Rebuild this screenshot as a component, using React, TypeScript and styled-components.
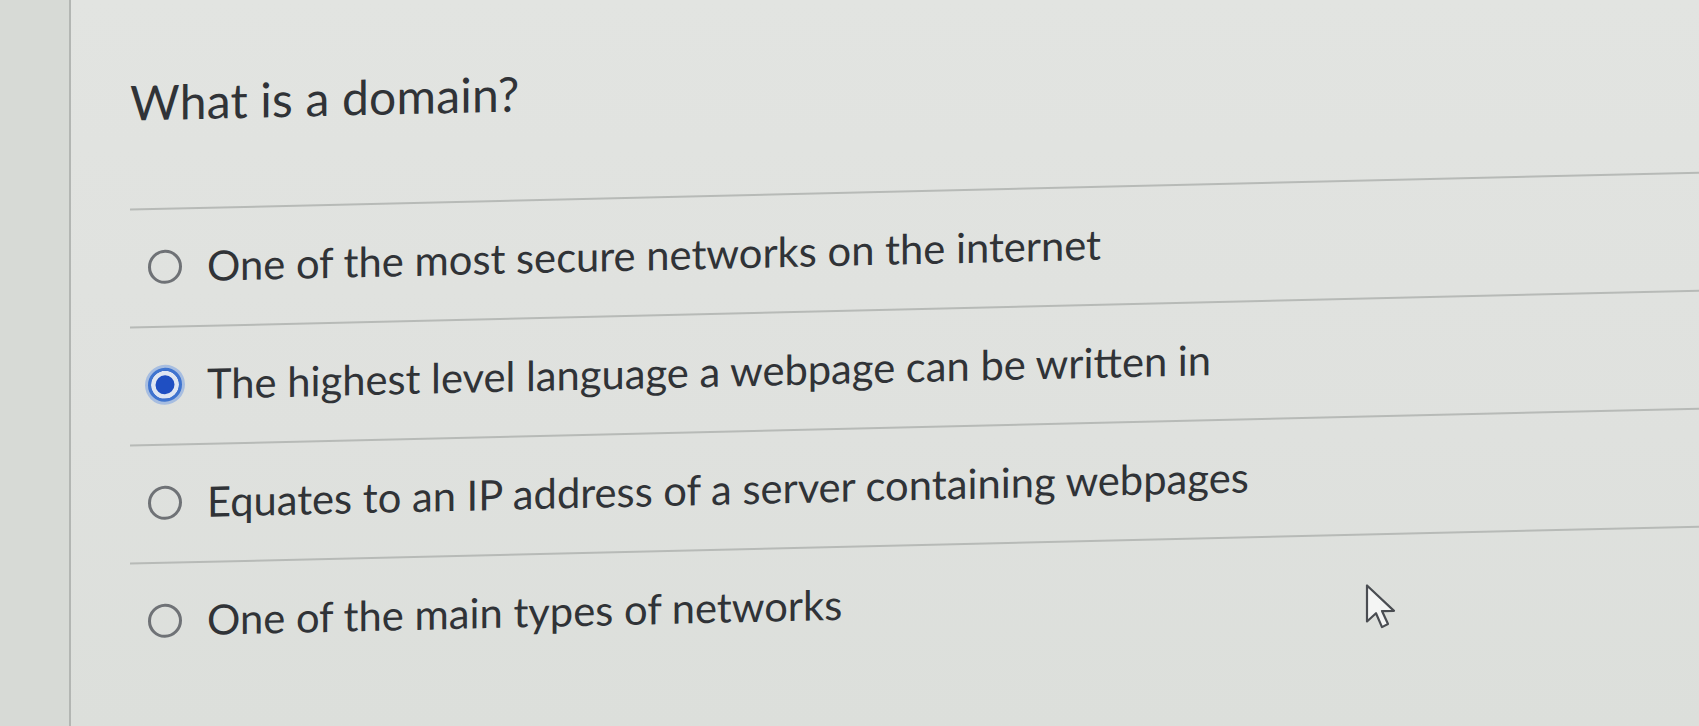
import React, { useState } from 'react';
import styled, { createGlobalStyle } from 'styled-components';

const GlobalStyle = createGlobalStyle`
    html, body {
        margin: 0;
        padding: 0;
        height: 100%;
        overflow: hidden;
    }
    body {
        background: #dfe1de;
        font-family: Lato, "Open Sans", "Noto Sans", sans-serif;
    }
`;

const answers = [
    'One of the most secure networks on the internet',
    'The highest level language a webpage can be written in',
    'Equates to an IP address of a server containing webpages',
    'One of the main types of networks',
];

const App = () => {
    const [selected, setSelected] = useState(1);

    return (
        <>
            <GlobalStyle />
            <Page>
                <Gutter />
                <Sheet>
                    <Question>What is a domain?</Question>
                    <AnswerList>
                        {answers.map((text, i) => (
                            <Answer key={text} onClick={() => setSelected(i)}>
                                <Radio $checked={selected === i} />
                                <AnswerText>{text}</AnswerText>
                            </Answer>
                        ))}
                    </AnswerList>
                    <Pointer viewBox="0 0 32 48" aria-hidden="true">
                        <path
                            d="M2 2 L2 38 L11 30 L17 44 L23 41 L17 28 L29 28 Z"
                            fill="#f4f5f4"
                            stroke="#4a4d52"
                            strokeWidth="2.2"
                            strokeLinejoin="round"
                        />
                    </Pointer>
                </Sheet>
            </Page>
        </>
    );
};

export default App;

const Page = styled.div`
    display: flex;
    width: 100vw;
    height: 100vh;
    background: linear-gradient(180deg, #e2e4e1 0%, #dfe1de 60%, #dcdfdb 100%);
`;

const Gutter = styled.div`
    width: 69px;
    flex: none;
    background: #d7dad6;
    border-right: 2px solid #b3b6b3;
`;

const Sheet = styled.main`
    position: relative;
    flex: 1;
    padding: 80px 0 0 59px;
    transform: skewY(-1.35deg);
    transform-origin: left top;
`;

const Question = styled.h1`
    margin: 0;
    font-size: 48px;
    font-weight: 400;
    line-height: 1;
    color: #303337;
    letter-spacing: 0.2px;
`;

const AnswerList = styled.div`
    display: flex;
    flex-direction: column;
    margin-top: 82px;
    margin-right: -40px;
`;

const Answer = styled.label`
    display: flex;
    align-items: center;
    gap: 25px;
    height: 118px;
    padding: 0 0 2px 18px;
    box-sizing: border-box;
    border-top: 2px solid #b7bab7;
    cursor: pointer;
`;

const Radio = styled.span<{ $checked: boolean }>`
    flex: none;
    width: 34px;
    height: 34px;
    box-sizing: border-box;
    border-radius: 50%;
    border: 3.5px solid ${p => (p.$checked ? '#3f74cf' : '#6f7276')};
    background: ${p => (p.$checked ? '#1f4fc2' : 'transparent')};
    box-shadow: ${p =>
        p.$checked
            ? 'inset 0 0 0 4.5px #dfe6f2, 0 0 0 3px rgba(120, 160, 225, 0.55)'
            : 'none'};
`;

const AnswerText = styled.span`
    font-size: 41.7px;
    line-height: 1;
    color: #303337;
    white-space: nowrap;
`;

const Pointer = styled.svg`
    position: absolute;
    left: 1294px;
    top: 614px;
    width: 32px;
    height: 48px;
`;
